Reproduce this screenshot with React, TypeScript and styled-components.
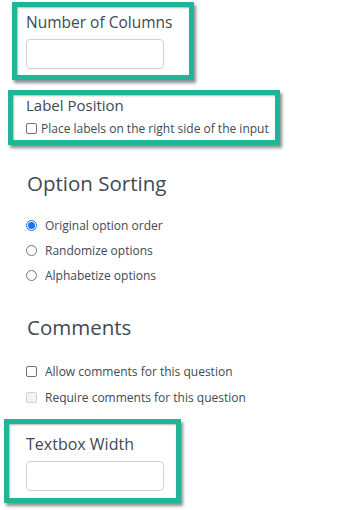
import React from "react";
import styled, { createGlobalStyle } from "styled-components";

const Global = createGlobalStyle`
  html, body { margin: 0; padding: 0; background: #ffffff; }
  body { font-family: "Open Sans", "Liberation Sans", sans-serif; color: #404a54; }
  * { box-sizing: border-box; }
`;

const Page = styled.div`
  width: 357px;
  height: 510px;
  overflow: hidden;
  display: flex;
  flex-direction: column;
  align-items: flex-start;
`;

const Highlight = styled.div<{ $mt: number; $ml: number; $w: number; $h: number; $pt: number; $pl: number }>`
  margin-top: ${(p) => p.$mt}px;
  margin-left: ${(p) => p.$ml}px;
  width: ${(p) => p.$w}px;
  height: ${(p) => p.$h}px;
  padding: ${(p) => p.$pt}px 0 0 ${(p) => p.$pl}px;
  border: 5px solid #20b597;
  box-shadow: 2px 3px 3px rgba(40, 50, 50, 0.55), inset 1px 1px 2px rgba(40, 50, 50, 0.35);
  background: #fff;
  display: flex;
  flex-direction: column;
  align-items: flex-start;
`;

const FieldLabel = styled.div<{ $size: number; $mb: number }>`
  font-size: ${(p) => p.$size}px;
  line-height: 20px;
  margin-bottom: ${(p) => p.$mb}px;
  color: #404a54;
  white-space: nowrap;
`;

const TextInput = styled.input`
  width: 138px;
  height: 30px;
  border: 1px solid #cfd3d7;
  border-radius: 4px;
  background: #fff;
  margin: 0;
  outline: none;
`;

const Section = styled.div<{ $mt: number }>`
  margin-top: ${(p) => p.$mt}px;
  margin-left: 26px;
  display: flex;
  flex-direction: column;
`;

const Heading = styled.div`
  font-size: 20.5px;
  line-height: 24px;
  color: #404a54;
  margin-left: 1px;
`;

const OptionList = styled.div<{ $mt: number; $row: number }>`
  margin-top: ${(p) => p.$mt}px;
  display: grid;
  grid-auto-rows: ${(p) => p.$row}px;
`;

const Option = styled.label<{ $gap: number; $size: number }>`
  display: flex;
  align-items: center;
  gap: ${(p) => p.$gap}px;
  font-size: ${(p) => p.$size}px;
  color: #404a54;
  white-space: nowrap;
`;

const Radio = styled.span<{ $checked?: boolean }>`
  width: 11px;
  height: 11px;
  border-radius: 50%;
  border: 1px solid ${(p) => (p.$checked ? "#1a73e8" : "#767676")};
  background: #fff;
  display: inline-flex;
  align-items: center;
  justify-content: center;
  flex: none;
  &::after {
    content: "";
    display: ${(p) => (p.$checked ? "block" : "none")};
    width: 7px;
    height: 7px;
    border-radius: 50%;
    background: #1a73e8;
  }
`;

const Box = styled.span<{ $size: number; $disabled?: boolean }>`
  width: ${(p) => p.$size}px;
  height: ${(p) => p.$size}px;
  border-radius: 2px;
  border: 1px solid ${(p) => (p.$disabled ? "#d3d3d3" : "#6f6f6f")};
  background: ${(p) => (p.$disabled ? "#f3f3f3" : "#fff")};
  flex: none;
`;

export default function App() {
  return (
    <>
      <Global />
      <Page>
        <Highlight $mt={2} $ml={12} $w={182} $h={78} $pt={5} $pl={9}>
          <FieldLabel $size={15.5} $mb={7}>Number of Columns</FieldLabel>
          <TextInput />
        </Highlight>

        <Highlight $mt={10} $ml={8} $w={272} $h={55} $pt={0} $pl={13}>
          <FieldLabel $size={15} $mb={5}>Label Position</FieldLabel>
          <Option $gap={4} $size={12}>
            <Box $size={11} />
            Place labels on the right side of the input
          </Option>
        </Highlight>

        <Section $mt={26}>
          <Heading>Option Sorting</Heading>
          <OptionList $mt={18} $row={25}>
            <Option $gap={8} $size={12}>
              <Radio $checked />
              Original option order
            </Option>
            <Option $gap={8} $size={12}>
              <Radio />
              Randomize options
            </Option>
            <Option $gap={8} $size={12}>
              <Radio />
              Alphabetize options
            </Option>
          </OptionList>
        </Section>

        <Section $mt={27}>
          <Heading>Comments</Heading>
          <OptionList $mt={19} $row={26}>
            <Option $gap={8} $size={12}>
              <Box $size={11} />
              Allow comments for this question
            </Option>
            <Option $gap={8} $size={12}>
              <Box $size={11} $disabled />
              Require comments for this question
            </Option>
          </OptionList>
        </Section>

        <Highlight $mt={9} $ml={4} $w={177} $h={84} $pt={10} $pl={17}>
          <FieldLabel $size={16} $mb={7}>Textbox Width</FieldLabel>
          <TextInput />
        </Highlight>
      </Page>
    </>
  );
}
